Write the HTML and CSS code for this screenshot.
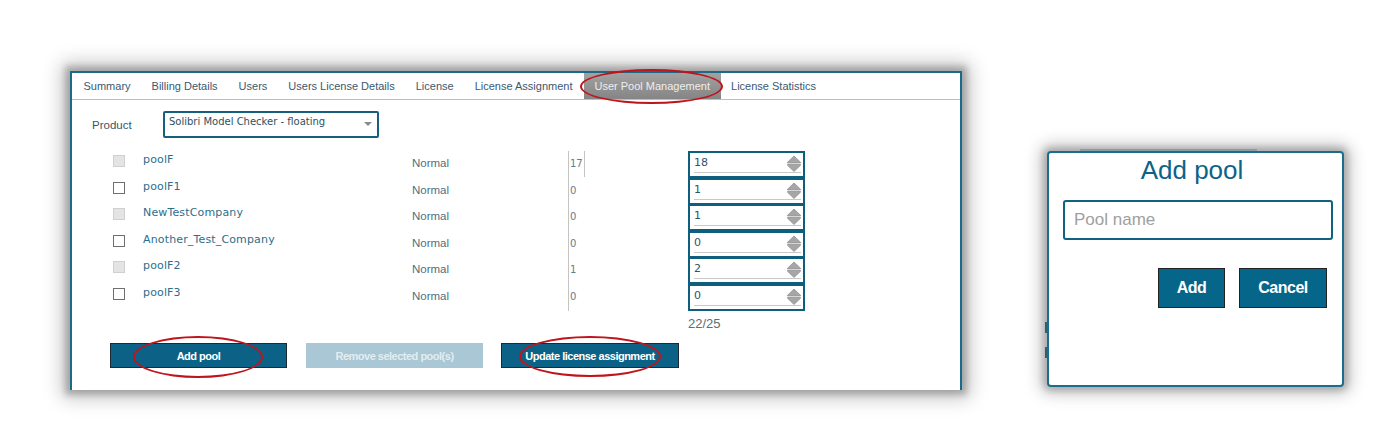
FILE: index.html
```
<!DOCTYPE html>
<html>
<head>
    <meta charset="UTF-8">
    <meta name="viewport" content="width=device-width, initial-scale=1.0">
    <title>User Pool Management</title>
    <link rel="stylesheet" href="styles.css">
</head>
<body>

    <div class="stage">
        <div class="panel">
            <div class="tabs">
                <span class="tab">Summary</span>
                <span class="tab">Billing Details</span>
                <span class="tab">Users</span>
                <span class="tab">Users License Details</span>
                <span class="tab">License</span>
                <span class="tab">License Assignment</span>
                <span class="tab active">User Pool Management<span class="ring ring-tab"></span></span>
                <span class="tab">License Statistics</span>
            </div>

            <div class="product-row">
                <span class="product-label">Product</span>
                <div class="select">
                    <span>Solibri Model Checker - floating</span>
                    <span class="caret"></span>
                </div>
            </div>

            <div class="pools">
                <div class="pool">
                    <span class="check disabled"></span>
                    <span class="pool-name">poolF</span>
                    <span class="pool-type">Normal</span>
                    <span class="pool-used"><span class="used-box">17</span></span>
                    <div class="spin"><div class="spin-field"><span>18</span><svg class="spin-arrows" viewBox="0 0 14 17"><path d="M0.5 7.2 L7 1 L13.5 7.2 V8 H0.5 Z"/><path d="M0.5 9.5 H13.5 V10.3 L7 16.5 L0.5 10.3 Z"/></svg></div></div>
                </div>
                <div class="pool">
                    <span class="check"></span>
                    <span class="pool-name">poolF1</span>
                    <span class="pool-type">Normal</span>
                    <span class="pool-used"><span>0</span></span>
                    <div class="spin"><div class="spin-field"><span>1</span><svg class="spin-arrows" viewBox="0 0 14 17"><path d="M0.5 7.2 L7 1 L13.5 7.2 V8 H0.5 Z"/><path d="M0.5 9.5 H13.5 V10.3 L7 16.5 L0.5 10.3 Z"/></svg></div></div>
                </div>
                <div class="pool">
                    <span class="check disabled"></span>
                    <span class="pool-name">NewTestCompany</span>
                    <span class="pool-type">Normal</span>
                    <span class="pool-used"><span>0</span></span>
                    <div class="spin"><div class="spin-field"><span>1</span><svg class="spin-arrows" viewBox="0 0 14 17"><path d="M0.5 7.2 L7 1 L13.5 7.2 V8 H0.5 Z"/><path d="M0.5 9.5 H13.5 V10.3 L7 16.5 L0.5 10.3 Z"/></svg></div></div>
                </div>
                <div class="pool">
                    <span class="check"></span>
                    <span class="pool-name">Another_Test_Company</span>
                    <span class="pool-type">Normal</span>
                    <span class="pool-used"><span>0</span></span>
                    <div class="spin"><div class="spin-field"><span>0</span><svg class="spin-arrows" viewBox="0 0 14 17"><path d="M0.5 7.2 L7 1 L13.5 7.2 V8 H0.5 Z"/><path d="M0.5 9.5 H13.5 V10.3 L7 16.5 L0.5 10.3 Z"/></svg></div></div>
                </div>
                <div class="pool">
                    <span class="check disabled"></span>
                    <span class="pool-name">poolF2</span>
                    <span class="pool-type">Normal</span>
                    <span class="pool-used"><span>1</span></span>
                    <div class="spin"><div class="spin-field"><span>2</span><svg class="spin-arrows" viewBox="0 0 14 17"><path d="M0.5 7.2 L7 1 L13.5 7.2 V8 H0.5 Z"/><path d="M0.5 9.5 H13.5 V10.3 L7 16.5 L0.5 10.3 Z"/></svg></div></div>
                </div>
                <div class="pool">
                    <span class="check"></span>
                    <span class="pool-name">poolF3</span>
                    <span class="pool-type">Normal</span>
                    <span class="pool-used"><span>0</span></span>
                    <div class="spin"><div class="spin-field"><span>0</span><svg class="spin-arrows" viewBox="0 0 14 17"><path d="M0.5 7.2 L7 1 L13.5 7.2 V8 H0.5 Z"/><path d="M0.5 9.5 H13.5 V10.3 L7 16.5 L0.5 10.3 Z"/></svg></div></div>
                </div>
            </div>

            <div class="total">22/25</div>

            <div class="actions">
                <button class="action-button">Add pool<span class="ring ring-add"></span></button>
                <button class="action-button disabled">Remove selected pool(s)</button>
                <button class="action-button">Update license assignment<span class="ring ring-update"></span></button>
            </div>
        </div>

        <div class="dialog">
            <div class="dialog-title">Add pool</div>
            <input class="dialog-input" type="text" placeholder="Pool name">
            <div class="dialog-buttons">
                <button class="dialog-button add">Add</button>
                <button class="dialog-button cancel">Cancel</button>
            </div>
        </div>
    </div>

</body>
</html>
```

FILE: styles.css
```
body {
    margin: 0;
    background-color: #ffffff;
    font-family: "Liberation Sans", Arial, sans-serif;
}
.stage {
    display: flex;
    align-items: flex-start;
    padding-top: 71px;
    padding-bottom: 47px;
}

/* main panel */
.panel {
    margin-left: 70px;
    width: 892px;
    height: 319px;
    box-sizing: border-box;
    border: 2px solid #1a6b89;
    border-bottom: none;
    background-color: #ffffff;
    box-shadow: 0 0 6px 5px rgba(0, 0, 0, 0.2), 0 0 18px 8px rgba(0, 0, 0, 0.24);
}
.tabs {
    display: flex;
    height: 26px;
    padding-left: 1px;
    border-bottom: 1px solid #bdbdbd;
}
.tab {
    position: relative;
    padding: 0 10.5px;
    font-size: 11px;
    line-height: 26px;
    color: #3b5870;
    white-space: nowrap;
}
.tab.active {
    margin-left: 1px;
    padding: 0 10.5px;
    color: #eeeeee;
    background: linear-gradient(#a2a2a2, #858585);
}
.ring {
    position: absolute;
    border: 2px solid #c0141c;
    border-radius: 50%;
    pointer-events: none;
}
.ring-tab {
    left: -4px;
    right: -2px;
    top: -4px;
    bottom: -5px;
}

.product-row {
    display: flex;
    align-items: center;
    margin-top: 11px;
    padding-left: 20px;
}
.product-label {
    width: 71px;
    font-size: 11.5px;
    color: #3a5566;
}
.select {
    position: relative;
    width: 216px;
    height: 27px;
    box-sizing: border-box;
    border: 2px solid #16607c;
    border-radius: 2px;
    padding: 3px 0 0 4px;
    font-family: "DejaVu Sans", Verdana, sans-serif;
    font-size: 10px;
    color: #2f4f60;
}
.caret {
    position: absolute;
    right: 5px;
    top: 9px;
    border-left: 4px solid transparent;
    border-right: 4px solid transparent;
    border-top: 4px solid #8a8a8a;
}

/* pool rows */
.pools {
    margin-top: 13px;
    padding-left: 41px;
}
.pool {
    display: grid;
    grid-template-columns: 30px 269px 156px 120px 117px;
    height: 26.5px;
}
.check {
    width: 12px;
    height: 12px;
    margin-top: 4px;
    box-sizing: border-box;
    border: 1px solid #6f6f6f;
    background-color: #ffffff;
}
.check.disabled {
    border-color: #d0d0d0;
    background-color: #e4e4e4;
}
.pool-name {
    margin-top: 2px;
    font-family: "DejaVu Sans", Verdana, sans-serif;
    font-size: 11px;
    letter-spacing: 0.15px;
    line-height: 13px;
    color: #2c6e8c;
}
.pool-type {
    margin-top: 5px;
    font-size: 11.5px;
    line-height: 14px;
    color: #4d6f80;
}
.pool-used {
    border-left: 1px solid #c4c4c4;
    padding-left: 1px;
    font-family: "DejaVu Sans", Verdana, sans-serif;
    font-size: 10px;
    color: #5e7e8e;
}
.pool-used span {
    display: inline-block;
    padding-top: 7px;
}
.pool-used .used-box {
    height: 19px;
    padding-right: 1px;
    border-right: 1px solid #c4c4c4;
}
.spin {
    display: flex;
    height: 100%;
    box-sizing: border-box;
    border: 2px solid #0e5f7e;
    padding: 0 2px 3px 4px;
    background-color: #ffffff;
}
.spin-field {
    flex: 1;
    display: flex;
    align-items: center;
    justify-content: space-between;
    border-bottom: 1px solid #c9c9c9;
    font-family: "DejaVu Sans", Verdana, sans-serif;
    font-size: 11px;
    color: #2d5568;
}
.spin-arrows {
    width: 14px;
    height: 17px;
    margin-top: 2px;
    fill: #a6a6a6;
    stroke: #8c8c8c;
    stroke-width: 0.7;
}

.total {
    margin-top: 6px;
    padding-left: 616px;
    font-size: 13px;
    line-height: 16px;
    color: #5a6e78;
}
.actions {
    display: flex;
    gap: 19px;
    margin-top: 11px;
    padding-left: 38px;
}
.action-button {
    position: relative;
    width: 177px;
    height: 25px;
    border: 1px solid #1c2b33;
    background-color: #0b6286;
    color: #ffffff;
    font-family: "Liberation Sans", Arial, sans-serif;
    font-size: 11px;
    font-weight: bold;
    letter-spacing: -0.5px;
    padding: 0;
}
.action-button.disabled {
    border-color: #a9c7d4;
    background-color: #a9c7d4;
    color: #e2edf2;
}
.action-button:last-child {
    width: 178px;
    margin-left: -1px;
}
.ring-add {
    left: 22px;
    right: 23px;
    top: -8px;
    bottom: -11px;
}
.ring-update {
    left: 17px;
    right: 17px;
    top: -8px;
    bottom: -10px;
}

/* dialog */
.dialog {
    position: relative;
    margin-left: 85px;
    margin-top: 80px;
    width: 297px;
    height: 236px;
    box-sizing: border-box;
    border: 2px solid #1a6d8c;
    border-radius: 4px;
    padding: 2px 9px 0 14px;
    background-color: #ffffff;
    box-shadow: 0 0 6px 4px rgba(0, 0, 0, 0.18), 0 0 16px 7px rgba(0, 0, 0, 0.22);
}
.dialog::before {
    content: "";
    position: absolute;
    top: -4px;
    left: 31px;
    width: 177px;
    height: 2px;
    background-color: #8c9ca4;
}
.dialog::after {
    content: "";
    position: absolute;
    left: -4px;
    top: 169px;
    width: 2px;
    height: 11px;
    background-color: #2a6076;
    box-shadow: 0 25px 0 #2a6076;
}
.dialog-title {
    text-align: center;
    margin-right: 12px;
    font-size: 26px;
    line-height: 30px;
    color: #0b6387;
}
.dialog-input {
    display: block;
    width: 270px;
    height: 40px;
    margin-top: 15px;
    box-sizing: border-box;
    border: 2px solid #0f6282;
    border-radius: 3px;
    padding: 0 9px;
    font-family: "Liberation Sans", Arial, sans-serif;
    font-size: 17px;
    outline: none;
}
.dialog-input::placeholder {
    color: #a0a0a0;
}
.dialog-buttons {
    display: flex;
    justify-content: flex-end;
    gap: 14px;
    margin-top: 28px;
    margin-right: 6px;
}
.dialog-button {
    height: 40px;
    border: 1px solid #222222;
    background-color: #06668a;
    color: #ffffff;
    font-family: "Liberation Sans", Arial, sans-serif;
    font-size: 16px;
    font-weight: bold;
    letter-spacing: -0.5px;
    padding: 0;
}
.dialog-button.add {
    width: 67px;
}
.dialog-button.cancel {
    width: 88px;
}
```
